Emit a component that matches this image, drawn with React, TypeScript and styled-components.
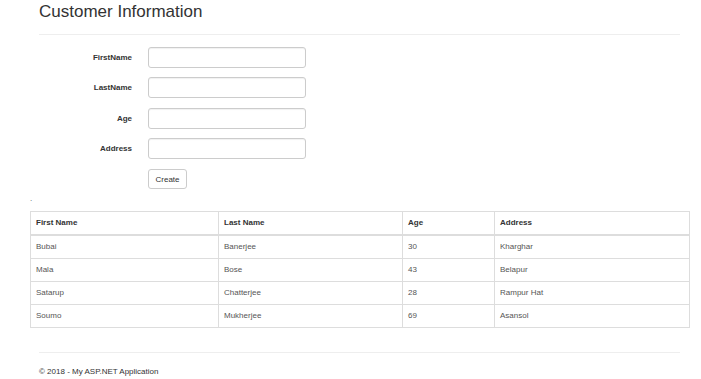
import React from "react";
import styled, { createGlobalStyle } from "styled-components";

const Global = createGlobalStyle`
  html, body { margin: 0; padding: 0; background: #fff; }
  body { font-family: "Liberation Sans", Arial, sans-serif; color: #333; }
`;

const Page = styled.div`
  padding: 0 12px 0 30px;
`;

const Inner = styled.div`
  margin: 0 9px;
`;

const Title = styled.h2`
  margin: 2px 0 0;
  font-size: 17px;
  line-height: 20px;
  font-weight: normal;
  color: #333;
`;

const Rule = styled.hr<{ $top: number }>`
  margin: ${(p) => p.$top}px 0 0;
  border: 0;
  border-top: 1px solid #eee;
  height: 0;
`;

const Form = styled.div`
  display: grid;
  grid-template-columns: 93px 158px;
  column-gap: 16px;
  row-gap: 9.3px;
  margin-top: 12px;
  align-items: center;
`;

const Label = styled.label`
  text-align: right;
  font-size: 8px;
  font-weight: bold;
  color: #333;
`;

const Input = styled.input`
  box-sizing: border-box;
  height: 21px;
  width: 158px;
  border: 1px solid #ccc;
  border-radius: 3px;
  box-shadow: inset 0 1px 1px rgba(0, 0, 0, 0.06);
  margin: 0;
  padding: 0 6px;
`;

const Button = styled.button`
  grid-column: 2;
  justify-self: start;
  box-sizing: border-box;
  width: 39px;
  height: 20px;
  margin-top: 1px;
  padding: 0;
  background: #fff;
  border: 1px solid #ccc;
  border-radius: 3px;
  font-family: "Liberation Sans", Arial, sans-serif;
  font-size: 8px;
  color: #333;
`;

const Dot = styled.div`
  margin-top: 6px;
  margin-left: 0;
  height: 8px;
  font-size: 8px;
  line-height: 8px;
  color: #555;
`;

const Table = styled.table`
  margin-top: 8px;
  width: 659px;
  border-collapse: collapse;
  border: 1px solid #ddd;
  table-layout: fixed;
  font-size: 8px;
`;

const Th = styled.th<{ $w: number }>`
  width: ${(p) => p.$w}px;
  box-sizing: border-box;
  height: 23px;
  padding: 0 5px;
  text-align: left;
  font-weight: bold;
  color: #333;
  border: 1px solid #ddd;
  border-bottom: 2px solid #ddd;
`;

const Td = styled.td`
  height: 22px;
  padding: 0 5px;
  color: #555;
  border: 1px solid #ddd;
`;

const Footer = styled.footer`
  margin-top: 14px;
  font-size: 8px;
  color: #333;
`;

const rows = [
  ["Bubai", "Banerjee", "30", "Kharghar"],
  ["Mala", "Bose", "43", "Belapur"],
  ["Satarup", "Chatterjee", "28", "Rampur Hat"],
  ["Soumo", "Mukherjee", "69", "Asansol"],
];

export default function App() {
  return (
    <>
      <Global />
      <Page>
        <Inner>
          <Title>Customer Information</Title>
          <Rule $top={12} />
          <Form>
            <Label>FirstName</Label>
            <Input />
            <Label>LastName</Label>
            <Input />
            <Label>Age</Label>
            <Input />
            <Label>Address</Label>
            <Input />
            <Button>Create</Button>
          </Form>
        </Inner>
        <Dot>.</Dot>
        <Table>
          <thead>
            <tr>
              <Th $w={188}>First Name</Th>
              <Th $w={184}>Last Name</Th>
              <Th $w={92}>Age</Th>
              <Th $w={195}>Address</Th>
            </tr>
          </thead>
          <tbody>
            {rows.map((r) => (
              <tr key={r[0]}>
                {r.map((c, i) => (
                  <Td key={i}>{c}</Td>
                ))}
              </tr>
            ))}
          </tbody>
        </Table>
        <Inner>
          <Rule $top={24} />
          <Footer>© 2018 - My ASP.NET Application</Footer>
        </Inner>
      </Page>
    </>
  );
}
